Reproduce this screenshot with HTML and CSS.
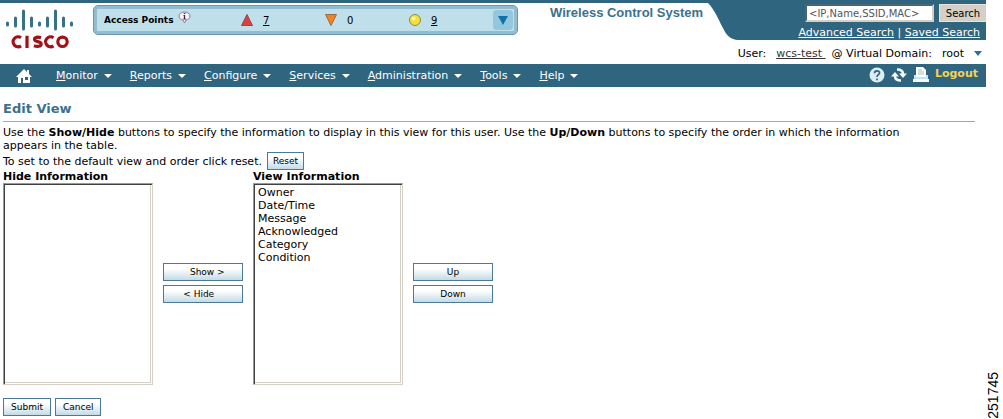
FILE: index.html
```html
<!DOCTYPE html>
<html lang="en">
<head>
    <meta charset="UTF-8">
    <meta name="viewport" content="width=device-width, initial-scale=1.0">
    <title>Wireless Control System - Edit View</title>
    <link rel="stylesheet" href="styles.css">
</head>
<body>
<div class="page">
    <div class="main">

        <!-- Header -->
        <div class="header">
            <div class="header-left">
                <svg class="logo" width="72" height="42" viewBox="0 0 72 42" role="img" aria-label="Cisco">
                    <g stroke="#3a6f88" stroke-width="3" stroke-linecap="round">
                        <path d="M3.500 15v2M11.500 10v8M19.500 3v18M27.500 10v8M35.500 15v2M43.500 10v8M51.500 3v18M59.500 10v8M67.500 15v2"/>
                    </g>
                    <g fill="none" stroke="#a01218" stroke-width="3.200">
                        <path d="M17 29.700a5 5 0 1 0 0 8.200M23 27.700v12.200M37 29.800c-3-1-6.500-.8-6.500 1.400 0 3.200 6.700 1.600 6.700 4.800 0 2.800-4.500 2.700-7.200 1.700M49.500 29.700a5 5 0 1 0 0 8.200"/>
                        <circle cx="58.500" cy="33.800" r="4.700"/>
                    </g>
                </svg>
                <div class="alarm-bar">
                    <b>Access Points</b>
                    <svg class="info-icon" width="13" height="13" viewBox="0 0 13 13">
                        <path d="M6.500 1C3.500 1 1 2.700 1 5s2 3.800 4 4l1.500 3L8 9c2-.2 4-1.700 4-4S9.500 1 6.500 1z" fill="#f6eff5" stroke="#877f9c"/>
                        <path d="M5.800 2.500h1.500M5.500 4.500h1V8M5.300 8h2.600" fill="none" stroke="#3b2440" stroke-width="1.200"/>
                    </svg>
                    <span class="alarm">
                        <svg width="12" height="12" viewBox="0 0 12 12"><path d="M6 .5L11.500 11.500H.5z" fill="#dc3f3f" stroke="#8d4a56"/></svg>
                        <a href="#">7</a>
                    </span>
                    <span class="alarm">
                        <svg width="12" height="12" viewBox="0 0 12 12"><path d="M.5.5h11L6 11.500z" fill="#f58220" stroke="#9b6a45"/></svg>
                        <span>0</span>
                    </span>
                    <span class="alarm">
                        <svg width="12" height="12" viewBox="0 0 12 12"><circle cx="6" cy="6" r="5.500" fill="#f7df35" stroke="#8a8a4d"/><circle cx="4.500" cy="4.500" r="2" fill="#fff8a8"/></svg>
                        <a href="#">9</a>
                    </span>
                    <button class="alarm-toggle" aria-label="Expand alarms">
                        <svg width="10" height="9" viewBox="0 0 10 9"><path d="M0 0h10L5 9z" fill="#0e72aa"/></svg>
                    </button>
                </div>
                <div class="product">Wireless Control System</div>
            </div>
            <div class="header-right">
                <div class="search-area">
                    <svg class="curve" width="30" height="40" viewBox="0 0 30 40"><path d="M0 0v3c7 7 11 18 16 27 3 6 7 9.500 14 10V0z" fill="#2f657f"/></svg>
                    <div class="search-box">
                        <div class="search-row">
                            <input type="text" class="search-input" value="&lt;IP,Name,SSID,MAC&gt;" aria-label="Search">
                            <button class="search-btn">Search</button>
                        </div>
                        <div class="search-links">
                            <a href="#">Advanced Search</a> | <a href="#">Saved Search</a>
                        </div>
                    </div>
                </div>
                <div class="user-row">
                    <span>User:</span>
                    <a href="#">wcs-test&nbsp;</a>
                    <span>@ Virtual Domain:</span>
                    <span class="domain">root</span>
                    <svg width="8" height="5" viewBox="0 0 8 5"><path d="M0 0h8L4 5z" fill="#2f7192"/></svg>
                </div>
            </div>
        </div>

        <!-- Menu -->
        <div class="navbar">
            <a href="#" class="home" aria-label="Home">
                <svg width="16" height="16" viewBox="0 0 16 16"><path d="M8 1L0 9h2v6h12V9h2l-3-3V2h-2v2z" fill="#fff"/><path d="M5 10h2v5H5zM9 9h3v3H9z" fill="#2f657f"/></svg>
            </a>
            <a href="#" class="menu"><span><u>M</u>onitor</span></a>
            <a href="#" class="menu"><span><u>R</u>eports</span></a>
            <a href="#" class="menu"><span><u>C</u>onfigure</span></a>
            <a href="#" class="menu"><span><u>S</u>ervices</span></a>
            <a href="#" class="menu"><span><u>A</u>dministration</span></a>
            <a href="#" class="menu"><span><u>T</u>ools</span></a>
            <a href="#" class="menu"><span><u>H</u>elp</span></a>
            <div class="nav-tools">
                <a href="#" aria-label="Help">
                    <svg width="16" height="16" viewBox="0 0 16 16"><circle cx="8" cy="8" r="7.500" fill="#dcedf4"/><path d="M5.500 6.300C5.500 3 10.800 3.200 10.500 6 10.300 7.800 8 7.700 8 10M8 11.500v1.800" fill="none" stroke="#2f657f" stroke-width="1.700"/></svg>
                </a>
                <a href="#" aria-label="Refresh">
                    <svg width="16" height="16" viewBox="0 0 16 16"><g fill="none" stroke="#f4fbff" stroke-width="2.600"><path d="M6 2.500c4 0 6 1.500 6 4.500"/><path d="M10 13.500c-4 0-6-1.500-6-4.500"/></g><path d="M8 6.500h8l-4 4.500zM0 9.500h8L4 5z" fill="#f4fbff"/></svg>
                </a>
                <a href="#" aria-label="Print">
                    <svg width="16" height="16" viewBox="0 0 16 16"><path d="M3 0h7l3 3v7H3z" fill="#fff"/><path d="M5 3h4M5 5h6M5 7h6" stroke="#9dbdcc"/><path d="M1 8h2v2h10V8h2v4H1z" fill="#c7e2ee"/><path d="M0 12h16v3H0z" fill="#f4fbff"/></svg>
                </a>
                <a href="#" class="logout">Logout</a>
            </div>
        </div>

        <!-- Edit View -->
        <form class="content">
            <h1>Edit View</h1>
            <p>Use the <b>Show/Hide</b> buttons to specify the information to display in this view for this user. Use the <b>Up/Down</b> buttons to specify the order in which the information appears in the table.</p>
            <div class="reset-row">
                <span>To set to the default view and order click reset.</span>
                <button type="button" class="btn">Reset</button>
            </div>
            <div class="lists">
                <div class="list">
                    <label for="hideInfo">Hide Information</label>
                    <select id="hideInfo" multiple></select>
                </div>
                <div class="list-buttons">
                    <button type="button" class="btn">&nbsp;&nbsp;&nbsp;Show &gt;</button>
                    <button type="button" class="btn">&lt; Hide&nbsp;&nbsp;&nbsp;</button>
                </div>
                <div class="list">
                    <label for="viewInfo">View Information</label>
                    <select id="viewInfo" multiple>
                        <option>Owner</option>
                        <option>Date/Time</option>
                        <option>Message</option>
                        <option>Acknowledged</option>
                        <option>Category</option>
                        <option>Condition</option>
                    </select>
                </div>
                <div class="list-buttons">
                    <button type="button" class="btn">Up</button>
                    <button type="button" class="btn">Down</button>
                </div>
            </div>
            <div class="form-buttons">
                <button type="button" class="btn">Submit</button>
                <button type="button" class="btn">Cancel</button>
            </div>
        </form>
    </div>

    <div class="figure-number">251745</div>
</div>
</body>
</html>
```
FILE: styles.css
```css
* {
    box-sizing: border-box;
}

body {
    margin: 0;
    background-color: #fff;
    color: #000;
    font-family: "DejaVu Sans", Verdana, sans-serif;
    font-size: 11px;
    line-height: 13px;
}

svg {
    display: block;
    flex: none;
}

button,
input,
select {
    font-family: inherit;
}

.page {
    display: flex;
    min-height: 100vh;
}

.main {
    flex: 1;
}

/* Header */
.header {
    display: flex;
    height: 64px;
}

.header-left {
    flex: 1;
    display: flex;
    align-items: flex-start;
    border-top: 3px solid #2f657f;
    padding-left: 4px;
}

.logo {
    margin-top: 5px;
}

.alarm-bar {
    display: flex;
    align-items: center;
    width: 425px;
    height: 30px;
    margin: 2px 32px 0 17px;
    padding: 0 4px 0 10px;
    border: 1px solid #6a97ad;
    border-radius: 5px;
    background-color: #bfdfeb;
    box-shadow: inset 0 0 0 3px #92bccf;
    font-size: 10px;
}

.alarm-bar b {
    font-size: 9px;
    white-space: nowrap;
}

.info-icon {
    margin: 0 auto 6px 4px;
}

.alarm {
    display: flex;
    align-items: center;
    gap: 10px;
    width: 84px;
}

.alarm a {
    color: #000;
}

.alarm-toggle {
    display: flex;
    align-items: center;
    justify-content: center;
    width: 20px;
    height: 20px;
    padding: 0;
    border: none;
    border-radius: 4px;
    background-color: #94c7dd;
}

.product {
    margin-top: 2px;
    color: #3c718c;
    font-family: "Liberation Sans", Arial, sans-serif;
    font-size: 13px;
    font-weight: bold;
    line-height: 16px;
    white-space: nowrap;
}

.header-right {
    width: 278px;
}

.search-area {
    display: flex;
    height: 40px;
}

.search-box {
    flex: 1;
    padding-top: 4px;
    background-color: #2f657f;
    color: #fff;
}

.search-row {
    display: flex;
    justify-content: flex-end;
    gap: 5px;
}

.search-input {
    width: 129px;
    height: 18px;
    padding: 0 2px;
    border: 2px solid #d4d0c8;
    border-top-color: #4a6672;
    border-left-color: #4a6672;
    background-color: #fff;
    color: #555;
    font-size: 10px;
}

.search-btn {
    width: 47px;
    height: 18px;
    padding: 0;
    border: 1px solid #e8e4dd;
    border-width: 1px 0 1px 1px;
    background-color: #d4d0c8;
    font-size: 10px;
}

.search-links {
    margin-top: 4px;
    padding-right: 6px;
    text-align: right;
    font-size: 11px;
    white-space: nowrap;
}

.search-links a {
    color: #fff;
}

.user-row {
    display: flex;
    justify-content: flex-end;
    align-items: center;
    gap: 6px;
    height: 24px;
    padding: 2px 4px 0 0;
    white-space: nowrap;
}

.user-row a {
    margin-left: 4px;
    color: #333;
}

.domain {
    margin: 0 4px;
}

/* Menu */
.navbar {
    display: flex;
    align-items: center;
    gap: 18px;
    height: 23px;
    padding: 0 8px 0 16px;
    background-color: #2f657f;
}

.home {
    margin-right: 6px;
}

.menu {
    display: flex;
    align-items: center;
    gap: 6px;
    color: #fff;
    text-decoration: none;
}

.menu::after {
    content: "";
    border: 4px solid transparent;
    border-top-color: #fff;
    border-bottom: none;
}

.nav-tools {
    display: flex;
    gap: 6px;
    margin-left: auto;
    padding-bottom: 2px;
}

.logout {
    color: #f3d257;
    font-weight: bold;
    text-decoration: none;
}

/* Edit View */
.content {
    padding: 14px 11px 0 3px;
}

.content h1 {
    margin: 0 0 4px;
    padding-bottom: 4px;
    border-bottom: 1px solid #a5a5a5;
    color: #3c718c;
    font-size: 13px;
    line-height: 16px;
}

.content p {
    margin: 0;
    padding-right: 40px;
}

.reset-row {
    display: flex;
    align-items: center;
    gap: 5px;
}

.btn {
    height: 18px;
    padding: 0 5px;
    border: 1px solid #4c7a96;
    background: linear-gradient(to bottom, #fff 30%, #c3dbe6);
    color: #000;
    font-size: 9px;
    line-height: 12px;
}

.lists {
    display: flex;
    gap: 10px;
}

.list {
    width: 150px;
}

.list label {
    display: block;
    font-weight: bold;
}

.list select {
    display: block;
    width: 100%;
    height: 202px;
    padding: 2px 0;
    border: 1px solid #d4d0c8;
    border-top-color: #9a9a9a;
    border-left-color: #9a9a9a;
    border-radius: 0;
    background-color: #fff;
    box-shadow: inset 1px 1px #404040, inset -1px -1px #fff, inset -2px -2px #d4d0c8;
    font-size: 11px;
}

.list option {
    min-height: 13px;
    padding: 0 4px;
    line-height: 13px;
}

.list-buttons {
    display: flex;
    flex-direction: column;
    justify-content: center;
    gap: 4px;
    width: 80px;
    padding-top: 10px;
}

.form-buttons {
    display: flex;
    gap: 4px;
    margin-top: 13px;
}

.form-buttons .btn {
    padding: 0 7px;
}

.figure-number {
    width: 17px;
    align-self: flex-end;
    writing-mode: vertical-rl;
    transform: rotate(180deg);
    font-family: "Liberation Sans", Arial, sans-serif;
    font-size: 14px;
    line-height: 14px;
}
```
